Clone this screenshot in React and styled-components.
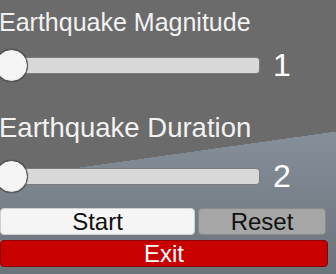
import React from 'react';
import styled, { createGlobalStyle } from 'styled-components';

const GlobalStyle = createGlobalStyle`
html, body {
margin:0;
padding:0;
}
body {
font-family: "Liberation Sans", Arial, sans-serif;
overflow:hidden;
}
`;

const Screen = styled.div`
width:336px;
height:274px;
overflow:hidden;
display:flex;
flex-direction:column;
background:
  linear-gradient(172deg, #6b6b6b 0 177px, transparent 177px),
  linear-gradient(to bottom, #8a949e 0, #86909a 130px, #6b737b 274px);
`;

const Label = styled.div`
height:30px;
line-height:30px;
font-size:${p => p.$size}px;
color:#f2f2f2;
white-space:nowrap;
margin-top:${p => p.$top}px;
margin-left:-1px;
`;

const SliderRow = styled.div`
display:flex;
align-items:center;
height:32px;
margin-top:${p => p.$top}px;
`;

const Track = styled.div`
position:relative;
flex:none;
width:259px;
height:15px;
background:#d8d8d8;
border:1px solid #7c7c7c;
border-left:none;
border-radius:0 4px 4px 0;
`;

const Knob = styled.div`
position:absolute;
left:-5px;
top:50%;
width:31px;
height:31px;
margin-top:-16.5px;
border-radius:50%;
background:#f5f5f5;
border:1px solid #4c4c4c;
box-shadow:0 0 1px rgba(0,0,0,0.6), inset 0 -1px 1px rgba(0,0,0,0.08);
`;

const Value = styled.span`
font-size:32px;
line-height:32px;
color:#ffffff;
margin-left:13px;
`;

const ButtonRow = styled.div`
display:flex;
gap:3px;
margin-top:${p => p.$top}px;
`;

const Button = styled.div`
box-sizing:border-box;
height:27px;
width:${p => p.$w}px;
display:flex;
align-items:center;
justify-content:center;
font-size:24px;
border-radius:4px;
background:${p => p.$bg};
border:1px solid ${p => p.$line};
color:${p => p.$fg};
`;

const Slider = ({ value, top }) => (
    <SliderRow $top={top}>
        <Track>
            <Knob />
        </Track>
        <Value>{value}</Value>
    </SliderRow>
);

export default function App() {
    return (
        <>
            <GlobalStyle />
            <Screen>
                <Label $top={7} $size={25}>Earthquake Magnitude</Label>
                <Slider value="1" top={12} />
                <Label $top={32} $size={27.5}>Earthquake Duration</Label>
                <Slider value="2" top={17} />
                <ButtonRow $top={16}>
                    <Button $w={195} $bg="#f5f5f5" $line="#cfcfcf" $fg="#111">Start</Button>
                    <Button $w={128} $bg="#a6a6a6" $line="#8a8a8a" $fg="#111">Reset</Button>
                </ButtonRow>
                <ButtonRow $top={5}>
                    <Button $w={328} $bg="#c80000" $line="#8e0000" $fg="#fff">Exit</Button>
                </ButtonRow>
            </Screen>
        </>
    );
}
